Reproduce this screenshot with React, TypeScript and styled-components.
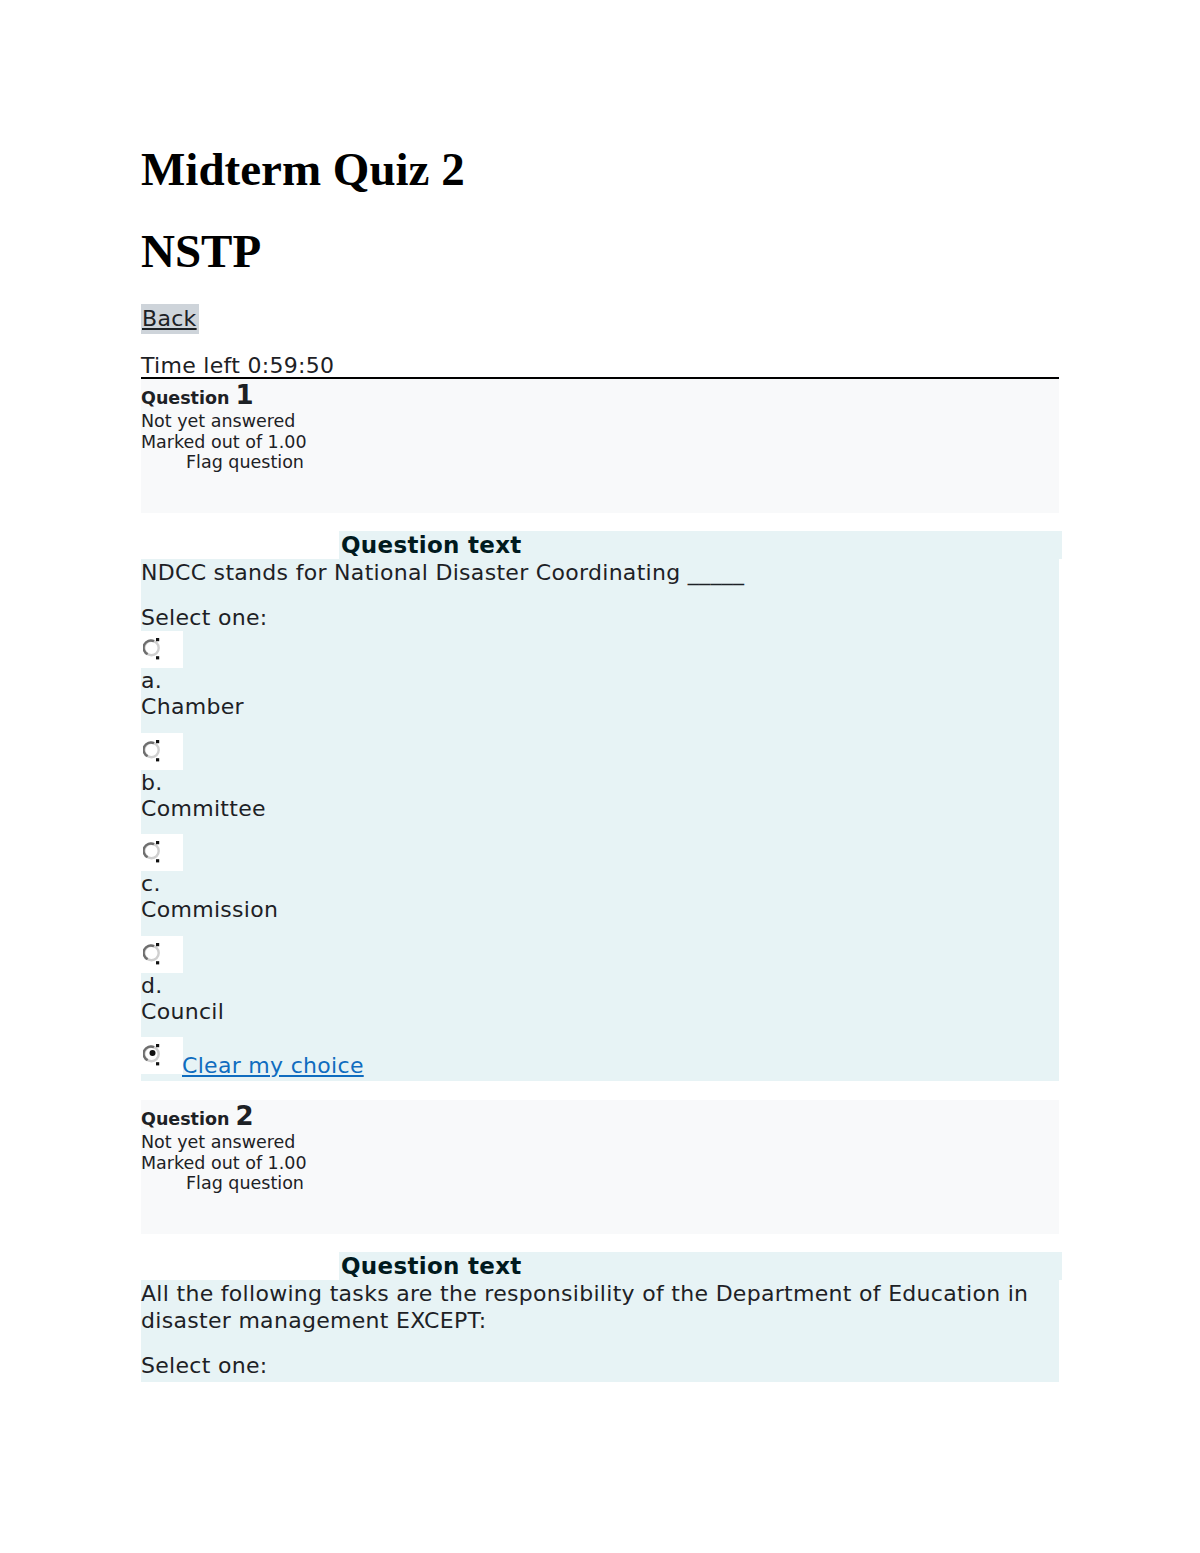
import React, { FC } from "react";
import styled, { createGlobalStyle } from "styled-components";

const GlobalStyle = createGlobalStyle`
  html, body {
    margin: 0;
    padding: 0;
    background: #ffffff;
  }
  body {
    font-family: "DejaVu Sans", "Liberation Sans", sans-serif;
    color: #1d2125;
  }
`;

type Option = { letter: string; label: string };

const q1Options: Option[] = [
  { letter: "a.", label: "Chamber" },
  { letter: "b.", label: "Committee" },
  { letter: "c.", label: "Commission" },
  { letter: "d.", label: "Council" },
];

// the radio as the PDF renders it: a grey ring, darker on the left, with two dark end marks
const RadioIcon: FC<{ checked?: boolean }> = ({ checked }) => (
  <svg width="20" height="26" viewBox="0 0 20 26">
    <circle cx="8.5" cy="13" r="7.2" fill="none" stroke="#cfcfcf" strokeWidth="2.4" />
    <path d="M11 6.2 A7.2 7.2 0 0 0 4.6 19.2" fill="none" stroke="#6e6e6e" strokeWidth="2.4" />
    <rect x="13" y="3" width="3.2" height="3.2" fill="#111" />
    <rect x="13" y="21.2" width="3.2" height="3.2" fill="#111" />
    {checked && <circle cx="9.5" cy="12" r="3" fill="#111" />}
  </svg>
);

const QuestionInfo: FC<{ number: number }> = ({ number }) => (
  <Info>
    <QNo>
      Question <QNum>{number}</QNum>
    </QNo>
    <InfoLine>Not yet answered</InfoLine>
    <InfoLine>Marked out of 1.00</InfoLine>
    <FlagLine>Flag question</FlagLine>
  </Info>
);

export default function App() {
  return (
    <>
      <GlobalStyle />
      <Page>
        <Title>Midterm Quiz 2</Title>
        <Title>NSTP</Title>
        <BackRow>
          <BackLink href="#">Back</BackLink>
        </BackRow>
        <Timer>Time left 0:59:50</Timer>

        <QuestionInfo number={1} />
        <QuestionTextHeading>Question text</QuestionTextHeading>
        <Content>
          <Prompt>NDCC stands for National Disaster Coordinating _____</Prompt>
          <SelectLine>Select one:</SelectLine>
          {q1Options.map((o) => (
            <OptionItem key={o.letter}>
              <RadioBox>
                <RadioIcon />
              </RadioBox>
              <TextLine>{o.letter}</TextLine>
              <TextLine>{o.label}</TextLine>
            </OptionItem>
          ))}
          <ClearRow>
            <RadioBox $inline>
              <RadioIcon checked />
            </RadioBox>
            <ClearLink href="#">Clear my choice</ClearLink>
          </ClearRow>
        </Content>

        <Spacer />
        <QuestionInfo number={2} />
        <QuestionTextHeading>Question text</QuestionTextHeading>
        <Content $tall>
          <Prompt>
            <NoWrap>
              All the following tasks are the responsibility of the Department of Education in
            </NoWrap>
            <br />
            disaster management EXCEPT:
          </Prompt>
          <SelectLine>Select one:</SelectLine>
        </Content>
      </Page>
    </>
  );
}

const Page = styled.div`
  width: 918px;
  padding: 143px 0 180px 141px;
  display: flex;
  flex-direction: column;
`;

const Title = styled.h1`
  margin: 0 0 30px;
  font-family: "Liberation Serif", "Times New Roman", serif;
  font-size: 47px;
  line-height: 52px;
  font-weight: bold;
  color: #000;
`;

const BackRow = styled.div`
  margin-top: -3px;
  line-height: 26px;
`;

const BackLink = styled.a`
  display: inline-block;
  padding: 2px 2px 2px 1px;
  background: #ced4da;
  color: #1d2125;
  font-size: 22px;
  line-height: 26px;
  letter-spacing: 0.3px;
  text-decoration: underline;
`;

const Timer = styled.div`
  margin-top: 21px;
  font-size: 22px;
  line-height: 22px;
  letter-spacing: 0.3px;
  border-bottom: 2px solid #000;
`;

const Info = styled.div`
  background: #f8f9fa;
  height: 134px;
  box-sizing: border-box;
  font-size: 17.5px;
  line-height: 20.5px;
`;

const QNo = styled.h3`
  margin: 0;
  padding-top: 1px;
  font-size: 17.5px;
  font-weight: bold;
  line-height: 31px;
  height: 32px;
  box-sizing: border-box;
`;

const QNum = styled.span`
  font-size: 26px;
`;

const InfoLine = styled.div``;

const FlagLine = styled.div`
  padding-left: 45px;
`;

const QuestionTextHeading = styled.h4`
  margin: 18px -3px 0 198px;
  padding-left: 2px;
  background: #e7f3f5;
  font-size: 23px;
  font-weight: bold;
  letter-spacing: 0.3px;
  line-height: 28px;
  height: 28px;
  color: #001a1e;
`;

const Content = styled.div<{ $tall?: boolean }>`
  background: #e7f3f5;
  padding: 1px 0 2px;
  font-size: 22px;
  line-height: ${({ $tall }) => ($tall ? "26.5px" : "26px")};
  letter-spacing: 0.3px;
`;

const Prompt = styled.p`
  margin: 0 0 19px;
`;

const NoWrap = styled.span`
  white-space: nowrap;
`;

const SelectLine = styled.div``;

const OptionItem = styled.div`
  margin-bottom: 12.5px;
`;

const RadioBox = styled.div<{ $inline?: boolean }>`
  width: 42px;
  height: 37px;
  background: #ffffff;
  display: flex;
  align-items: flex-start;
  padding: 4px 0 0 2px;
  box-sizing: border-box;
  ${({ $inline }) => $inline && `margin-bottom: 5px; flex-shrink: 0;`}
`;

const TextLine = styled.div``;

const ClearRow = styled.div`
  display: flex;
  align-items: flex-end;
`;

const ClearLink = styled.a`
  color: #0f6cbf;
  text-decoration: underline;
  line-height: 26px;
  margin-left: -1px;
`;

const Spacer = styled.div`
  height: 19px;
`;
